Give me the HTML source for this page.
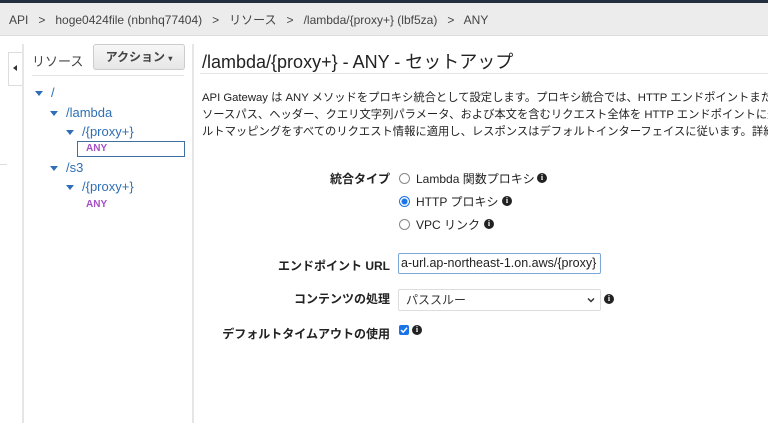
<!DOCTYPE html>
<html><head><meta charset="utf-8"><style>
body{margin:0;width:768px;height:423px;overflow:hidden;background:#fff;font-family:"Liberation Sans","Noto Sans CJK JP",sans-serif;color:#333;position:relative}
.a{position:absolute;white-space:nowrap}
.top{left:0;top:0;width:768px;height:3px;background:#232f3e}
.bc{left:0;top:3px;width:768px;height:32px;background:#ececec;border-bottom:1px solid #ddd}
.bct{left:9px;top:11px;font-size:12px;color:#444}
.blue{color:#2f6fb5}
.tri{display:inline-block;width:0;height:0;border-left:4px solid transparent;border-right:4px solid transparent;border-top:5px solid #2f6fb5;margin-right:8px;vertical-align:middle}
.any{color:#a64fc8;font-weight:bold;font-size:10px}
.lab{font-size:12px;font-weight:bold;color:#222;text-align:right;width:190px}
.info{position:absolute;width:10px;height:10px;border-radius:50%;background:#222;color:#fff;font-size:8px;font-weight:bold;text-align:center;line-height:10px;font-family:"Liberation Serif",serif}
.rad{display:inline-block;width:9px;height:9px;border-radius:50%;border:1px solid #888;vertical-align:-1px;margin-right:6px;background:#fff}
</style></head><body>
<div class="a top"></div>
<div class="a bc"></div>
<div class="a bct">API &nbsp;&nbsp;&gt;&nbsp;&nbsp; hoge0424file (nbnhq77404) &nbsp;&nbsp;&gt;&nbsp;&nbsp; リソース &nbsp;&nbsp;&gt;&nbsp;&nbsp; /lambda/{proxy+} (lbf5za) &nbsp;&nbsp;&gt;&nbsp;&nbsp; ANY</div>
<div class="a" style="left:8px;top:52px;width:14px;height:32px;border:1px solid #ddd;border-right:none;background:#fff"></div>
<div class="a" style="left:13px;top:65px;width:0;height:0;border-top:3px solid transparent;border-bottom:3px solid transparent;border-right:4px solid #333"></div>
<div class="a" style="left:0;top:164px;width:7px;height:1px;background:#ddd"></div>
<div class="a" style="left:22px;top:44px;width:2px;height:379px;background:#e6e6e6"></div>
<div class="a" style="left:192px;top:44px;width:2px;height:379px;background:#e6e6e6"></div>
<div class="a" style="left:32px;top:51px;font-size:13px;color:#444">リソース</div>
<div class="a" style="left:93px;top:44px;width:90px;height:24px;border:1px solid #ccc;border-radius:3px;background:linear-gradient(#f7f7f7,#e6e6e6);font-size:12px;font-weight:bold;color:#444;text-align:center;line-height:24px">アクション <span style="font-size:8px">▾</span></div>
<div class="a" style="left:32px;top:75px;width:152px;height:1px;background:#e4e4e4"></div>
<div class="a blue" style="left:35px;top:85px;font-size:13px"><span class="tri"></span>/</div>
<div class="a blue" style="left:50px;top:105px;font-size:13px"><span class="tri"></span>/lambda</div>
<div class="a blue" style="left:66px;top:124px;font-size:13px"><span class="tri"></span>/{proxy+}</div>
<div class="a" style="left:77px;top:141px;width:106px;height:14px;border:1px solid #3f6ea3"></div>
<div class="a any" style="left:86px;top:143px">ANY</div>
<div class="a blue" style="left:50px;top:160px;font-size:13px"><span class="tri"></span>/s3</div>
<div class="a blue" style="left:66px;top:179px;font-size:13px"><span class="tri"></span>/{proxy+}</div>
<div class="a any" style="left:86px;top:199px">ANY</div>
<div class="a" style="left:202px;top:48px;font-size:18px;color:#222">/lambda/{proxy+} - ANY - セットアップ</div>
<div class="a" style="left:200px;top:73px;width:568px;height:1px;background:#e4e4e4"></div>
<div class="a" style="left:202px;top:90px;font-size:11.3px;line-height:17px;color:#222">API Gateway は ANY メソッドをプロキシ統合として設定します。プロキシ統合では、HTTP エンドポイントまた<br>ソースパス、ヘッダー、クエリ文字列パラメータ、および本文を含むリクエスト全体を HTTP エンドポイントに送<br>ルトマッピングをすべてのリクエスト情報に適用し、レスポンスはデフォルトインターフェイスに従います。詳細</div>
<div class="a lab" style="left:200px;top:170px">統合タイプ</div>
<div class="a" style="left:399px;top:170px;font-size:12px;color:#222"><span class="rad"></span>Lambda 関数プロキシ</div>
<span class="info" style="left:537px;top:173px">i</span>
<div class="a" style="left:399px;top:193px;font-size:12px;color:#222"><span class="rad" style="border:1px solid #1a73e8;background:radial-gradient(circle,#1a73e8 2.5px,#fff 3.5px)"></span>HTTP プロキシ</div>
<span class="info" style="left:502px;top:196px">i</span>
<div class="a" style="left:399px;top:216px;font-size:12px;color:#222"><span class="rad"></span>VPC リンク</div>
<span class="info" style="left:484px;top:219px">i</span>
<div class="a lab" style="left:200px;top:257px">エンドポイント URL</div>
<div class="a" style="left:398px;top:253px;width:201px;height:19px;border:1px solid #7aa7d8;border-radius:2px;font-size:12.5px;color:#222;line-height:19px;overflow:hidden;text-indent:2px">a-url.ap-northeast-1.on.aws/{proxy}</div>
<div class="a lab" style="left:200px;top:290px">コンテンツの処理</div>
<div class="a" style="left:398px;top:289px;width:201px;height:20px;border:1px solid #ddd;border-radius:2px;font-size:12px;color:#333;line-height:20px;text-indent:7px">パススルー
<svg style="position:absolute;right:5px;top:7px" width="8" height="6" viewBox="0 0 8 6"><path d="M1 1.5L4 4.5L7 1.5" fill="none" stroke="#333" stroke-width="1.5"/></svg></div>
<span class="info" style="left:604px;top:294px">i</span>
<div class="a lab" style="left:200px;top:325px">デフォルトタイムアウトの使用</div>
<div class="a" style="left:399px;top:325px;width:10px;height:10px;background:#1a73e8;border-radius:2px"><svg width="10" height="10" viewBox="0 0 10 10" style="display:block"><path d="M2 5L4.2 7.2L8 2.8" fill="none" stroke="#fff" stroke-width="1.5"/></svg></div>
<span class="info" style="left:412px;top:325px">i</span>
</body></html>
